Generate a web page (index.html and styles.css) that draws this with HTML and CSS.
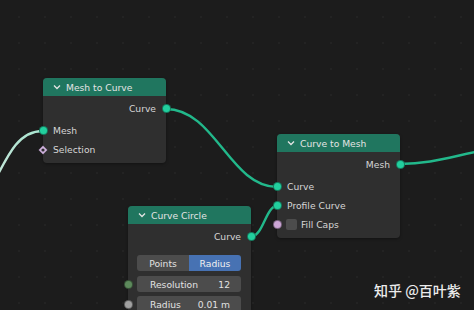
FILE: index.html
```html
<!DOCTYPE html>
<html lang="en">
<head>
    <meta charset="UTF-8">
    <meta name="viewport" content="width=device-width, initial-scale=1.0">
    <title>Geometry Nodes</title>
    <link rel="stylesheet" href="styles.css">
</head>
<body>
    <div id="editor">
        <svg class="wires" width="474" height="310" viewBox="0 0 474 310">
            <defs>
                <linearGradient id="fade" x1="0" y1="1" x2="1" y2="0">
                    <stop offset="0" stop-color="#c8e6da"/>
                    <stop offset="1" stop-color="#a8e4cf"/>
                </linearGradient>
            </defs>
            <path class="pale" d="M -8 186 C 10 150, 20 131, 43 131"/>
            <path d="M 166 109 C 215 109, 230 187, 277 187"/>
            <path d="M 252 236 C 263 236, 266 206, 277 206"/>
            <path d="M 400 164 C 430 164, 450 157, 480 151"/>
        </svg>

        <div class="node" id="mesh-to-curve">
            <div class="node-header">
                <svg class="chevron" viewBox="0 0 8 6"><polyline points="1,1.5 4,4.5 7,1.5"/></svg>
                Mesh to Curve
            </div>
            <div class="node-body">
                <div class="row out">Curve<span class="socket geo"></span></div>
                <div class="inputs">
                    <div class="row">Mesh<span class="socket geo"></span></div>
                    <div class="row">Selection
                        <svg class="diamond" viewBox="0 0 10 10">
                            <polygon points="5,0.5 9.5,5 5,9.5 0.5,5"/>
                            <circle cx="5" cy="5" r="1.6"/>
                        </svg>
                    </div>
                </div>
            </div>
        </div>

        <div class="node" id="curve-to-mesh">
            <div class="node-header">
                <svg class="chevron" viewBox="0 0 8 6"><polyline points="1,1.5 4,4.5 7,1.5"/></svg>
                Curve to Mesh
            </div>
            <div class="node-body">
                <div class="row out">Mesh<span class="socket geo"></span></div>
                <div class="inputs">
                    <div class="row">Curve<span class="socket geo"></span></div>
                    <div class="row">Profile Curve<span class="socket geo"></span></div>
                    <div class="row"><span class="checkbox"></span>Fill Caps<span class="socket bool"></span></div>
                </div>
            </div>
        </div>

        <div class="node" id="curve-circle">
            <div class="node-header">
                <svg class="chevron" viewBox="0 0 8 6"><polyline points="1,1.5 4,4.5 7,1.5"/></svg>
                Curve Circle
            </div>
            <div class="node-body">
                <div class="row out">Curve<span class="socket geo"></span></div>
                <div class="toggle">
                    <span>Points</span>
                    <span class="active">Radius</span>
                </div>
                <div class="field-row">
                    <div class="field"><span>Resolution</span><span>12</span></div>
                    <span class="socket int"></span>
                </div>
                <div class="field-row">
                    <div class="field"><span>Radius</span><span>0.01 m</span></div>
                    <span class="socket float"></span>
                </div>
            </div>
        </div>

        <div class="watermark">知乎 @百叶紫</div>
    </div>
</body>
</html>
```

FILE: styles.css
```css
html, body {
    margin: 0;
    width: 474px;
    height: 310px;
    overflow: hidden;
    background: #1c1c1c;
}
#editor {
    position: relative;
    width: 474px;
    height: 310px;
    overflow: hidden;
    background-color: #1c1c1c;
    background-image: radial-gradient(circle, #232323 0.8px, transparent 1.2px);
    background-size: 26px 26px;
    background-position: 6px 4px;
    font-family: "DejaVu Sans", sans-serif;
    font-size: 9.2px;
    color: #d6d6d6;
}
.wires {
    position: absolute;
    left: 0;
    top: 0;
}
.wires path {
    fill: none;
    stroke: #22b88b;
    stroke-width: 2.4;
    stroke-linecap: round;
}
.wires path.pale {
    stroke: url(#fade);
}
.node {
    position: absolute;
    width: 123px;
    background: #2f2f2f;
    border-radius: 4px;
    box-shadow: 0 1px 3px rgba(0, 0, 0, 0.35);
}
#mesh-to-curve { left: 43px; top: 78px; }
#curve-to-mesh { left: 277px; top: 134px; }
#curve-circle { left: 128px; top: 206px; height: 104px; border-radius: 4px 4px 0 0; }
.node-header {
    height: 18px;
    display: flex;
    align-items: center;
    gap: 5px;
    padding-left: 10px;
    background: #20765f;
    border-radius: 4px 4px 0 0;
    color: #e4e4e4;
}
.chevron {
    width: 8px;
    height: 6px;
}
.chevron polyline {
    fill: none;
    stroke: #e4e4e4;
    stroke-width: 1.3;
}
.node-body {
    padding: 3px 0 4px;
}
.inputs {
    margin-top: 3px;
}
.row {
    position: relative;
    height: 19px;
    display: flex;
    align-items: center;
    padding: 0 10px;
}
.row.out {
    justify-content: flex-end;
}
.socket {
    position: absolute;
    top: 50%;
    left: -4.5px;
    width: 9px;
    height: 9px;
    margin-top: -4.5px;
    border-radius: 50%;
    box-sizing: border-box;
    border: 1px solid rgba(0, 0, 0, 0.4);
}
.row.out .socket {
    left: auto;
    right: -4.5px;
}
.socket.geo { background: #22cf9e; }
.socket.bool { background: #cca6d6; }
.socket.int { background: #5d8a5c; }
.socket.float { background: #a1a1a1; }
.diamond {
    position: absolute;
    left: -5px;
    top: 50%;
    width: 10px;
    height: 10px;
    margin-top: -5px;
}
.diamond polygon {
    fill: #d0b2df;
    stroke: rgba(0, 0, 0, 0.35);
    stroke-width: 0.6;
}
.diamond circle {
    fill: #2f2f2f;
}
.checkbox {
    width: 11px;
    height: 11px;
    margin-left: -1px;
    margin-right: 4px;
    border-radius: 2px;
    background: #4c4c4c;
}
.toggle {
    display: flex;
    margin: 9px 10px 5px 9px;
    height: 16px;
    border-radius: 3px;
    overflow: hidden;
    color: #e2e2e2;
}
.toggle span {
    flex: 1;
    display: flex;
    align-items: center;
    justify-content: center;
    background: #4c4c4c;
}
.toggle span.active {
    background: #4772b3;
    color: #f0f0f0;
}
.field-row {
    position: relative;
    height: 16px;
    margin: 0 10px 4px 9px;
}
.field {
    height: 16px;
    display: flex;
    align-items: center;
    justify-content: space-between;
    padding: 0 11px 0 13px;
    background: #4c4c4c;
    border-radius: 3px;
    color: #e2e2e2;
}
.field-row .socket {
    left: -13.5px;
}
.watermark {
    position: absolute;
    left: 374px;
    top: 281px;
    font-family: "Noto Sans CJK SC", sans-serif;
    font-size: 14px;
    font-weight: 500;
    line-height: 18px;
    color: #ececec;
    white-space: nowrap;
}
```
